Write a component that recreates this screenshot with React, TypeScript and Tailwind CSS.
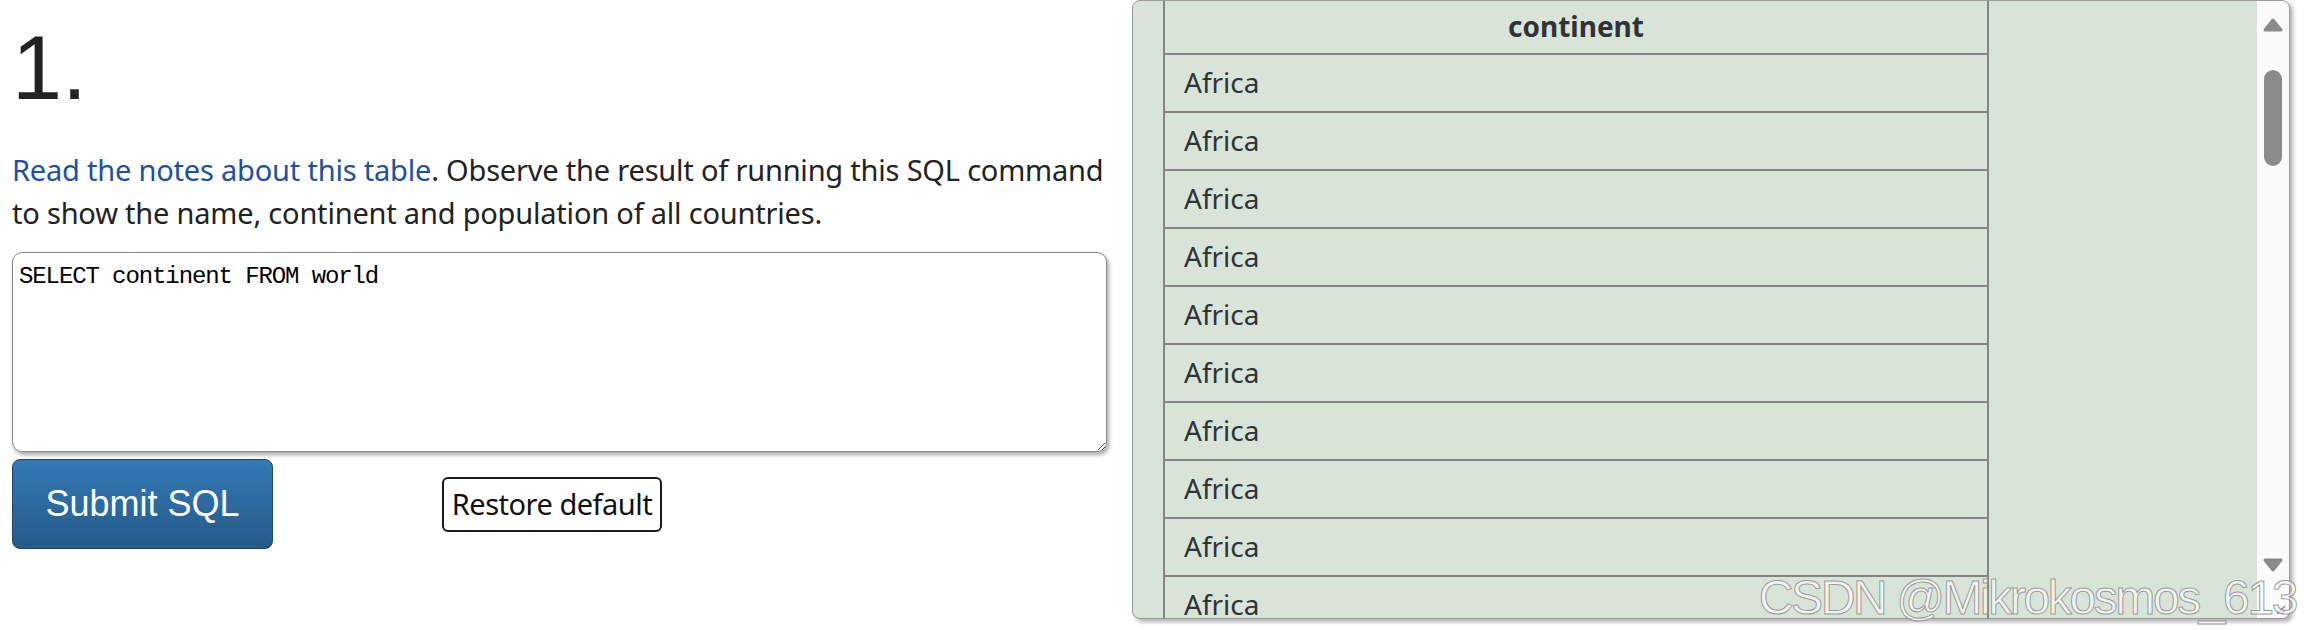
/**
 * SQLZoo style exercise: question text, SQL editor and a scrolling
 * result table on the right.
 */

const rows = Array.from({ length: 12 }, () => "Africa");

function ScrollTrack() {
  return (
    <div className="relative flex w-[32px] shrink-0 flex-col items-center bg-[#fbfbfb]">
      <svg className="mt-[17px]" width="20" height="14" viewBox="0 0 20 14">
        <path d="M10 2 L18 12 H2 Z" fill="#8a8a8a" stroke="#8a8a8a" strokeWidth="3" strokeLinejoin="round" />
      </svg>
      <div className="mt-[38px] h-[96px] w-[18px] rounded-full bg-[#8b8b8b]" />
      <div className="flex-1" />
      <svg className="mb-[46px]" width="20" height="14" viewBox="0 0 20 14">
        <path d="M10 12 L18 2 H2 Z" fill="#8a8a8a" stroke="#8a8a8a" strokeWidth="3" strokeLinejoin="round" />
      </svg>
      <svg className="absolute bottom-[3px] right-[3px]" width="12" height="12" viewBox="0 0 12 12">
        <path d="M11 3 L3 11 M11 7 L7 11" stroke="#7a7a7a" strokeWidth="1.2" />
      </svg>
    </div>
  );
}

function ResultPanel() {
  return (
    <div className="flex h-[619px] w-[1158px] shrink-0 overflow-hidden rounded-[8px] border border-[#9a9a9a] bg-[#d9e4d8] shadow-[3px_3px_4px_rgba(0,0,0,0.3)]">
      <div className="w-[30px] shrink-0" />
      <div className="w-[826px] shrink-0 border-x-2 border-[#858585] font-['Noto_Sans',sans-serif] text-[28px] text-[#2f3337]">
        <div className="flex h-[54px] items-center justify-center border-b-2 border-[#858585] pb-[2px] font-bold">
          continent
        </div>
        {rows.map((r, i) => (
          <div key={i} className="flex h-[58px] items-center border-b-2 border-[#858585] pb-[2px] pl-[19px]">
            {r}
          </div>
        ))}
      </div>
      <div className="flex-1" />
      <ScrollTrack />
    </div>
  );
}

export default function App() {
  return (
    <div className="relative flex h-[630px] w-[2306px] gap-[25px] bg-white pl-3">
      <div className="flex w-[1095px] shrink-0 flex-col">
        <h1 className="mt-[23px] font-['Liberation_Sans',Arial,sans-serif] text-[90px] leading-none text-[#222]">
          1.
        </h1>
        <p className="mt-[35px] font-['Noto_Sans',sans-serif] text-[29px] leading-[43px] tracking-[-0.2px] text-[#222]">
          <a className="text-[#1d4fa3]">Read the notes about this table</a>. Observe the result of running this SQL
          command to show the name, continent and population of all countries.
        </p>
        <textarea
          className="mt-[18px] h-[200px] w-[1095px] rounded-[10px] border border-[#8a8a8a] px-[6px] pt-[10px] font-['Liberation_Mono',monospace] text-[24px] leading-[1.2] tracking-[-1.1px] text-black shadow-[2px_3px_4px_rgba(0,0,0,0.35)] outline-none"
          defaultValue="SELECT continent FROM world"
          spellCheck={false}
        />
        <div className="mt-[7px] flex items-center gap-[169px]">
          <button className="h-[90px] w-[261px] rounded-[8px] border border-[#1e4466] bg-linear-to-b from-[#337ab7] to-[#265a88] font-['Liberation_Sans',Arial,sans-serif] text-[36px] text-white">
            Submit SQL
          </button>
          <button className="h-[55px] w-[220px] rounded-[6px] border-2 border-[#1a1a1a] bg-white font-['Noto_Sans',sans-serif] text-[29px] tracking-[-0.5px] text-[#111]">
            Restore default
          </button>
        </div>
      </div>
      <ResultPanel />
      <div className="absolute bottom-[8px] right-[10px] font-['Liberation_Sans',Arial,sans-serif] text-[48px] leading-none tracking-[-2.4px] text-[rgba(255,255,255,0.65)] [-webkit-text-stroke:1px_rgba(140,140,140,0.85)]">
        CSDN @Mikrokosmos_613
      </div>
    </div>
  );
}
